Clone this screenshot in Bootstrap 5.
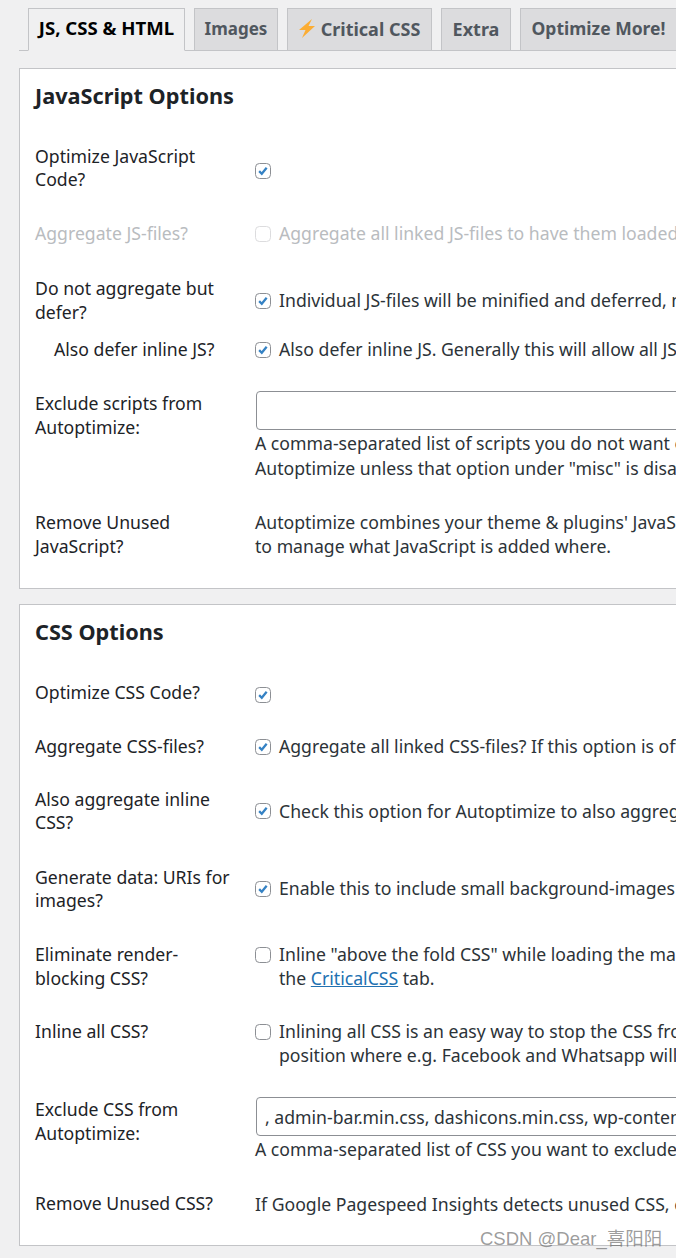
<!DOCTYPE html>
<html lang="en">
  <head>
    <meta charset="UTF-8" />
    <meta name="viewport" content="width=device-width, initial-scale=1.0" />
    <link rel="stylesheet" href="https://cdn.jsdelivr.net/npm/bootstrap@5.3.2/dist/css/bootstrap.min.css" />
    <title>Autoptimize settings</title>
    <style>
      html, body { height: 1258px; overflow: hidden; }
      body {
        background: #f0f0f1;
        font-family: "Noto Sans", sans-serif;
        font-size: 17.65px;
        line-height: 23.4px;
        color: #1d2327;
        position: relative;
      }
      .page-wrap { width: 950px; padding: 8px 0 0 19px; }
      .ao-tabs { gap: 9px; padding-left: 9px; border-bottom: 1px solid #c3c4c7; height: 43px; flex-wrap: nowrap; }
      .ao-tabs .nav-link {
        height: 43px;
        padding: 0 0 2px;
        display: flex;
        align-items: center;
        justify-content: center;
        gap: 6px;
        font-weight: 700;
        font-size: 18px;
        line-height: 1;
        white-space: nowrap;
        color: #50575e;
        background: #dcdcde;
        border: 1px solid #c3c4c7;
        border-radius: 0;
        margin: 0;
      }
      .ao-tabs .nav-link.active { background: #f0f0f1; color: #000; border-bottom-color: #f0f0f1; }
      .ao-tabs .tab-js { width: 157px; font-size: 18.6px; }
      .ao-tabs .tab-img { width: 84px; font-size: 17px; }
      .ao-tabs .tab-crit { width: 145px; }
      .ao-tabs .tab-extra { width: 70px; }
      .ao-tabs .tab-more { width: 157px; font-size: 17.5px; }
      .opt-card {
        background: #fff;
        border: 1px solid #c3c4c7;
        border-radius: 0;
        padding: 0 15px;
      }
      .opt-card.first-box { margin-top: 17px; height: 521px; }
      .opt-card.second-box { margin-top: 15px; height: 642px; }
      .opt-card h2 { font-size: 21.7px; font-weight: 700; line-height: 28px; margin: 13px 0 35px; color: #1d2327; }
      .opt-row { display: flex; padding-bottom: 31px; }
      .opt-row.rowgap-14 { padding-bottom: 14px; }
      .opt-row.rowgap-29 { padding-bottom: 29px; }
      .opt-row.rowgap-30 { padding-bottom: 30px; }
      .opt-row.rowgap-32 { padding-bottom: 32px; }
      .opt-label { width: 220px; flex: none; padding-right: 15px; }
      .opt-label.indent { padding-left: 19px; }
      .opt-value { flex: 1; min-width: 0; color: #2c3338; white-space: nowrap; }
      .opt-value.mid { display: flex; align-items: center; gap: 8px; }
      .opt-value.top-align { display: flex; align-items: flex-start; gap: 8px; }
      .text-block { margin-top: -1px; }
      .opt-value a { color: #2271b1; }
      .line-indent { margin-left: 1px; }
      .opt-value p { margin: 0; line-height: 24px; }
      .opt-value p.hint-text { line-height: 25px; }
      .opt-input + p.hint-text { margin-top: 1px; }
      .opt-check {
        width: 16px;
        height: 16px;
        margin: 0;
        flex: none;
        border: 1px solid #8c8f94;
        border-radius: 4px;
        box-shadow: none;
      }
      .top-align .opt-check { margin-top: 4px; }
      .opt-check.lone { margin-top: 5px; }
      .opt-check:checked {
        background-color: #fff;
        border-color: #8c8f94;
        background-image: url("data:image/svg+xml,%3Csvg xmlns='http://www.w3.org/2000/svg' viewBox='0 0 16 16'%3E%3Cpath fill='none' stroke='%233582c4' stroke-width='2.6' d='M3.6 8.2l3 3 5.6-7'/%3E%3C/svg%3E");
        background-size: 14px;
      }
      .opt-check:disabled { opacity: 1; background-color: #fff; border-color: #dcdcde; }
      .muted-row .opt-label, .muted-row .opt-value { color: #b9bcbf; }
      .opt-input {
        height: 39px;
        margin: -1px 0 0 1px;
        border: 1px solid #8c8f94;
        border-radius: 4px;
        padding: 0 8px;
        font-size: 17.65px;
        color: #2c3338;
        box-shadow: none;
      }
      .wm-text {
        position: absolute;
        left: 480px;
        top: 1227px;
        font-family: "Liberation Sans", "Noto Sans CJK SC", sans-serif;
        font-size: 18.5px;
        line-height: 24px;
        color: rgba(90, 90, 90, 0.6);
        white-space: nowrap;
      }
    </style>
  </head>
  <body>
    <div class="page-wrap">
      <nav class="nav ao-tabs">
        <a class="nav-link tab-js active" href="#">JS, CSS &amp; HTML</a>
        <a class="nav-link tab-img" href="#">Images</a>
        <a class="nav-link tab-crit" href="#">
          <svg width="16" height="19" viewBox="0 0 16 19"><path fill="#fbad34" d="M13 0 0 11h6.5L3 19 16 7H9.5z" /></svg>
          Critical CSS
        </a>
        <a class="nav-link tab-extra" href="#">Extra</a>
        <a class="nav-link tab-more" href="#">Optimize More!</a>
      </nav>

      <div class="card opt-card first-box">
        <h2>JavaScript Options</h2>
        <div class="opt-row rowgap-30">
          <div class="opt-label">Optimize JavaScript Code?</div>
          <div class="opt-value mid"><input class="form-check-input opt-check lone" type="checkbox" checked /></div>
        </div>
        <div class="opt-row muted-row rowgap-32">
          <div class="opt-label">Aggregate JS-files?</div>
          <div class="opt-value mid"><input class="form-check-input opt-check" type="checkbox" disabled /><span>Aggregate all linked JS-files to have them loaded and executed in one go</span></div>
        </div>
        <div class="opt-row rowgap-14">
          <div class="opt-label">Do not aggregate but defer?</div>
          <div class="opt-value mid"><input class="form-check-input opt-check" type="checkbox" checked /><span>Individual JS-files will be minified and deferred, making them non-render-blocking</span></div>
        </div>
        <div class="opt-row">
          <div class="opt-label indent">Also defer inline JS?</div>
          <div class="opt-value mid"><input class="form-check-input opt-check" type="checkbox" checked /><span>Also defer inline JS. Generally this will allow all JS to be deferred</span></div>
        </div>
        <div class="opt-row rowgap-30">
          <div class="opt-label">Exclude scripts from Autoptimize:</div>
          <div class="opt-value">
            <input class="form-control opt-input" type="text" />
            <p class="hint-text">A comma-separated list of scripts you do not want optimized</p>
            <p class="hint-text">Autoptimize unless that option under "misc" is disabled.</p>
          </div>
        </div>
        <div class="opt-row">
          <div class="opt-label">Remove Unused JavaScript?</div>
          <div class="opt-value text-block">
            <p>Autoptimize combines your theme &amp; plugins' JavaScript, but it does not allow you</p>
            <p>to manage what JavaScript is added where.</p>
          </div>
        </div>
      </div>

      <div class="card opt-card second-box">
        <h2>CSS Options</h2>
        <div class="opt-row">
          <div class="opt-label">Optimize CSS Code?</div>
          <div class="opt-value mid"><input class="form-check-input opt-check lone" type="checkbox" checked /></div>
        </div>
        <div class="opt-row rowgap-29">
          <div class="opt-label">Aggregate CSS-files?</div>
          <div class="opt-value mid"><input class="form-check-input opt-check" type="checkbox" checked /><span>Aggregate all linked CSS-files? If this option is off, each file is minified</span></div>
        </div>
        <div class="opt-row">
          <div class="opt-label">Also aggregate inline CSS?</div>
          <div class="opt-value mid"><input class="form-check-input opt-check" type="checkbox" checked /><span>Check this option for Autoptimize to also aggregate CSS in the HTML</span></div>
        </div>
        <div class="opt-row">
          <div class="opt-label">Generate data: URIs for images?</div>
          <div class="opt-value mid"><input class="form-check-input opt-check" type="checkbox" checked /><span>Enable this to include small background-images in the CSS itself</span></div>
        </div>
        <div class="opt-row rowgap-30">
          <div class="opt-label">Eliminate render-blocking CSS?</div>
          <div class="opt-value top-align">
            <input class="form-check-input opt-check" type="checkbox" />
            <div class="text-block">
              <p>Inline "above the fold CSS" while loading the main stylesheet with a delay</p>
              <p class="line-indent">the <a href="#">CriticalCSS</a> tab.</p>
            </div>
          </div>
        </div>
        <div class="opt-row">
          <div class="opt-label">Inline all CSS?</div>
          <div class="opt-value top-align">
            <input class="form-check-input opt-check" type="checkbox" />
            <div class="text-block">
              <p>Inlining all CSS is an easy way to stop the CSS from being render-blocking</p>
              <p class="line-indent">position where e.g. Facebook and Whatsapp will not show previews</p>
            </div>
          </div>
        </div>
        <div class="opt-row rowgap-30">
          <div class="opt-label">Exclude CSS from Autoptimize:</div>
          <div class="opt-value">
            <input class="form-control opt-input" type="text" value=", admin-bar.min.css, dashicons.min.css, wp-content/cache/" />
            <p class="hint-text">A comma-separated list of CSS you want to exclude from being optimized</p>
          </div>
        </div>
        <div class="opt-row">
          <div class="opt-label">Remove Unused CSS?</div>
          <div class="opt-value"><p>If Google Pagespeed Insights detects unused CSS, consider using a plugin</p></div>
        </div>
      </div>
    </div>
    <div class="wm-text">CSDN @Dear_喜阳阳</div>
  </body>
</html>
